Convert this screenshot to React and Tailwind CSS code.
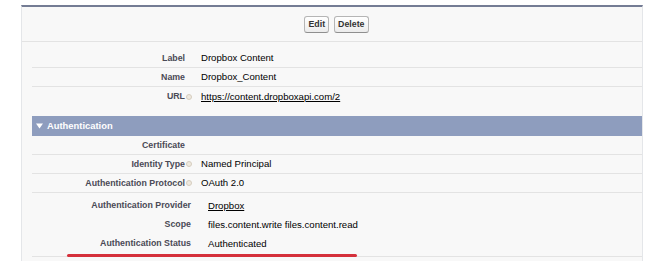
import React from 'react';

const font = { fontFamily: '"Liberation Sans", Arial, sans-serif' };

const HelpOrb = () => (
  <span className="inline-block align-middle ml-[1px] -mr-[7px] w-[6px] h-[6px] rounded-full border border-[#d6cdbf] bg-[#efe9df]" />
);

const Row = ({ label, help, children, border = true, wide = false }) => (
  <div className={`flex items-center h-[19px] ${border ? 'border-b border-[#e3e3e3]' : ''}`}>
    <div
      className={`${wide ? 'w-[176px] pr-[17px]' : 'w-[169px] pr-[16px]'} shrink-0 text-right text-[8.8px] font-bold text-[#4a4a56] leading-none whitespace-nowrap`}
    >
      {label}
      {help && <HelpOrb />}
    </div>
    <div className="text-[9.6px] text-black leading-none whitespace-nowrap">{children}</div>
  </div>
);

const Button = ({ children }) => (
  <button className="h-[17px] px-[3px] rounded-[3px] border border-[#b5b5b5] border-b-[#8f8f8f] bg-gradient-to-b from-white to-[#ececec] text-[8.8px] font-bold text-[#333] leading-none">
    {children}
  </button>
);

export default function App() {
  return (
    <div className="relative min-h-screen h-[261px] overflow-hidden bg-white pt-[5px] pl-[21px] pr-[10px]" style={font}>
      <div className="h-full bg-[#f8f8f8] border-t-2 border-t-[#747c94] border-x border-x-[#e4e6e9]">
        <div className="h-[35px] flex items-center justify-center gap-[5px] pl-[9px] border-b border-[#e3e3e3]">
          <Button>Edit</Button>
          <Button>Delete</Button>
        </div>

        <div className="pl-[10px]">
          <div className="pt-[7px] pb-[10px]">
            <Row label="Label">Dropbox Content</Row>
            <Row label="Name">Dropbox_Content</Row>
            <Row label="URL" help border={false}>
              <span className="underline">https://content.dropboxapi.com/2</span>
            </Row>
          </div>

          <div className="h-[20px] flex items-center bg-[#8e9dbe] pl-[4px] text-white">
            <svg width="7" height="6" viewBox="0 0 7 6" className="mr-[4px]">
              <path d="M0 0.5h7L3.5 5.5z" fill="#fff" />
            </svg>
            <span className="text-[9.4px] font-bold leading-none">Authentication</span>
          </div>

          <Row label="Certificate"></Row>
          <Row label="Identity Type" help>Named Principal</Row>
          <Row label="Authentication Protocol" help>OAuth 2.0</Row>

          <div className="pt-[3px] pb-[3px] border-b border-[#e3e3e3]">
            <Row label="Authentication Provider" wide border={false}>
              <span className="underline">Dropbox</span>
            </Row>
            <Row label="Scope" wide border={false}>files.content.write files.content.read</Row>
            <Row label="Authentication Status" wide border={false}>Authenticated</Row>
          </div>
        </div>
      </div>

      <div className="absolute left-[67px] top-[254px] w-[290px] h-[2.5px] rounded-full bg-[#d5303b]" />
    </div>
  );
}
